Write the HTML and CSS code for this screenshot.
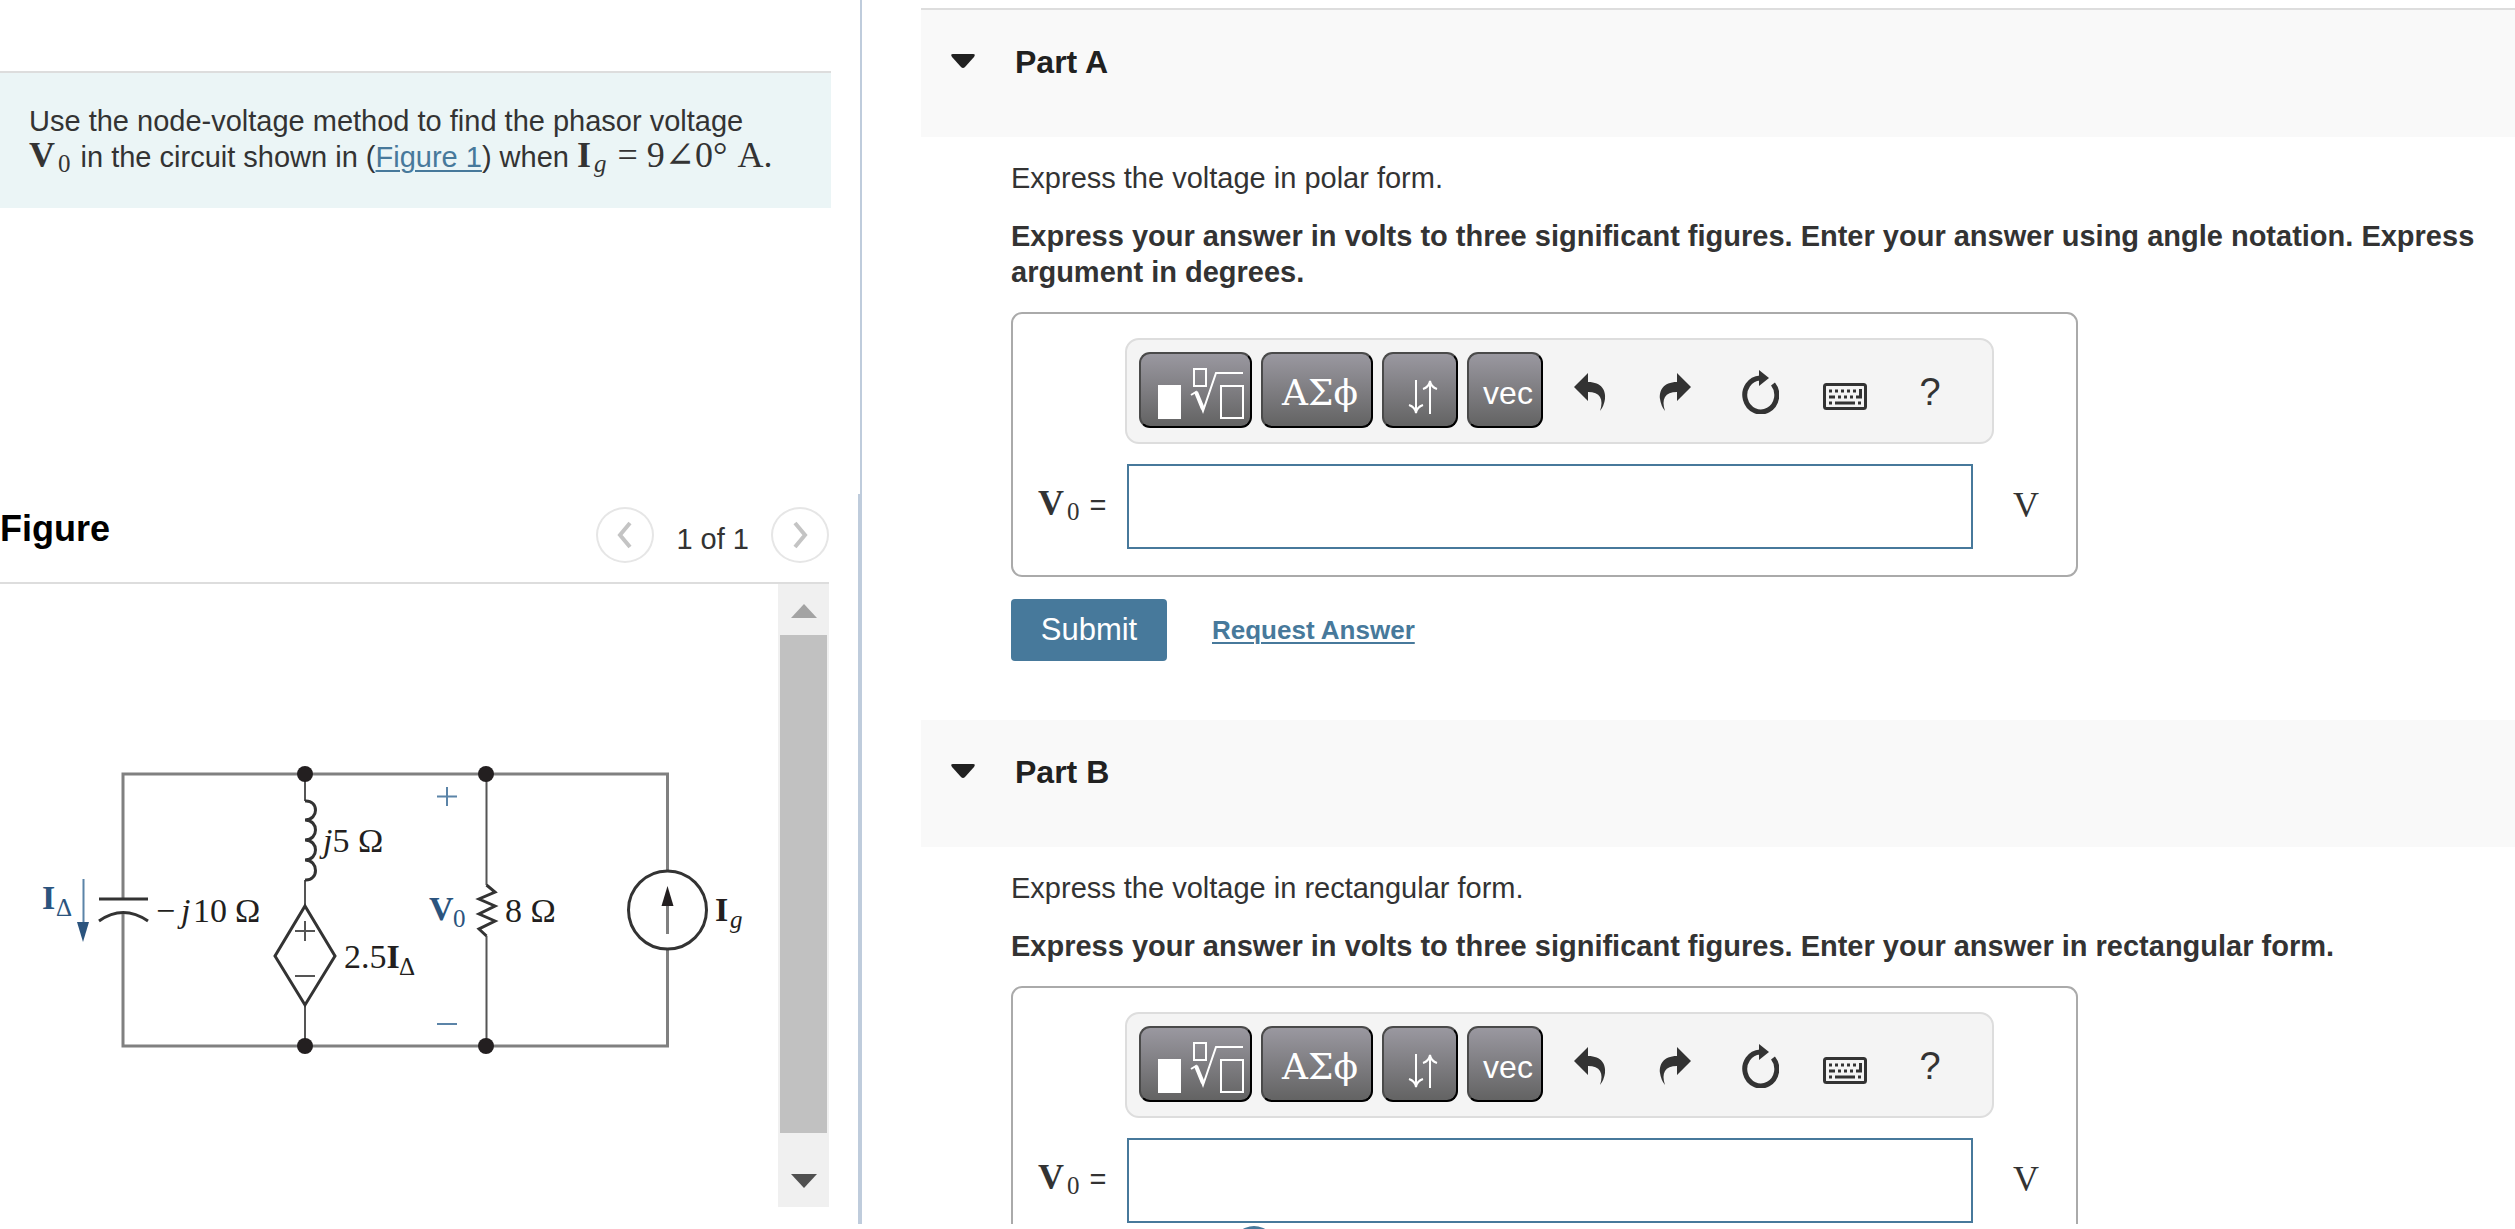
FILE: index.html
```html
<!DOCTYPE html>
<html lang="en">
<head>
<meta charset="utf-8">
<title>Node-voltage method</title>
<link rel="stylesheet" href="styles.css">
</head>
<body>
<svg class="sprite" aria-hidden="true">
  <symbol id="i-root" viewBox="0 0 86 52">
    <rect x="0" y="18" width="23" height="34" fill="#fff"/>
    <rect x="36" y="2" width="12" height="17" fill="none" stroke="#fff" stroke-width="2"/>
    <path d="M33 28l5-3 7 19 13-38h27" fill="none" stroke="#fff" stroke-width="2"/>
    <path d="M38 25l7 17" stroke="#fff" stroke-width="4"/>
    <rect x="63" y="19" width="22" height="32" fill="none" stroke="#fff" stroke-width="2"/>
  </symbol>
  <symbol id="i-updown" viewBox="0 0 30 34">
    <path d="M8 0v32M1 25q6 2 7 8q1-6 7-8M22 34V2M15 9q6-2 7-8q1 6 7 8" fill="none" stroke="#fff" stroke-width="2"/>
  </symbol>
  <symbol id="i-undo" viewBox="0 0 32 38">
    <path d="M0 14L14 0v9C28 9 32 18 31 26q-1 7-5 12C30 26 26 19 14 19v9z" fill="#333"/>
  </symbol>
  <symbol id="i-reset" viewBox="0 0 38 44">
    <path d="M19 8A16 17 0 1 0 32 14" fill="none" stroke="#333" stroke-width="5"/>
    <path d="M18 0l10 8-10 8z" fill="#333"/>
  </symbol>
  <symbol id="i-keys" viewBox="0 0 44 27">
    <rect x="1.500" y="1.500" width="41" height="24" rx="2" fill="none" stroke="#333" stroke-width="3"/>
    <path d="M6 8h3M12 8h3M18 8h3M24 8h3M30 8h3M6 14h6M15 14h3M21 14h3M27 14h3M33 14h6M37.500 6v9M6 20h3M12 20h20M35 20h3" fill="none" stroke="#333" stroke-width="3"/>
  </symbol>
</svg>

<main class="page">
  <section class="left">
    <div class="problem">
      <p>Use the node-voltage method to find the phasor voltage <span class="math"><b>V</b><sub>0</sub></span> in the circuit shown in (<a href="#figure">Figure 1</a>) when <span class="math"><b>I</b><sub><i>g</i></sub><span class="rel">=</span>9∠0°<span class="qty">A</span>.</span></p>
    </div>
    <div class="figure" id="figure">
      <header class="figure-head">
        <h2>Figure</h2>
        <nav class="pager">
          <button type="button" aria-label="Previous figure"><svg width="16" height="28" viewBox="0 0 16 28"><path d="M13 2L3 14l10 12"/></svg></button>
          <span>1 of 1</span>
          <button type="button" aria-label="Next figure"><svg width="16" height="28" viewBox="0 0 16 28"><path d="M3 2l10 12L3 26"/></svg></button>
        </nav>
      </header>
      <div class="figure-body">
        <svg class="circuit" viewBox="0 584 778 623" role="img" aria-label="Circuit diagram">
          <g class="wire">
            <path d="M123 899V774H667.500V870M123 912V1046H667.500V950"/>
            <path class="thin" d="M305 774V801M305 880V906M305 1005V1046M486.500 774V885M486.500 936V1046"/>
          </g>
          <g class="part">
            <path d="M99 899H148M99 921Q123 904 148 921"/>
            <path d="M305 801C319 800 319 820 305 820C319 820 319 840 305 840C319 840 319 860 305 860C319 860 319 881 305 880"/>
            <path d="M305 906L335 956 305 1005 275 956Z"/>
            <path class="thin" d="M295 931H315M305 921V941M295 976H315"/>
            <path d="M486.500 885L495 892 479 899 495 906 479 914 495 921 479 929 486.500 936"/>
            <circle cx="667.500" cy="910" r="39"/>
            <path class="wire" d="M667.500 934V903"/>
          </g>
          <path d="M667.500 886l-6 20h12z"/>
          <circle cx="305" cy="774" r="8"/><circle cx="486" cy="774" r="8"/><circle cx="305" cy="1046" r="8"/><circle cx="486" cy="1046" r="8"/>
          <g class="blue">
            <path d="M83.500 879V924M437 796.500H457M447 787V806M437 1024H457"/>
            <path class="fill" d="M77 922h12l-6 20z"/>
            <text x="42" y="909"><tspan class="b">I</tspan><tspan class="s" x="56" y="916">Δ</tspan></text>
            <text x="429" y="920"><tspan class="b">V</tspan><tspan class="s" x="453" y="927">0</tspan></text>
          </g>
          <text x="323" y="852"><tspan class="i">j</tspan>5 Ω</text>
          <text x="156" y="922">−<tspan class="i" x="181">j</tspan><tspan x="193">10</tspan><tspan x="235">Ω</tspan></text>
          <text x="344" y="968">2.5<tspan class="b">I</tspan><tspan class="s" x="399" y="975">Δ</tspan></text>
          <text x="505" y="922">8 Ω</text>
          <text x="715" y="921"><tspan class="b">I</tspan><tspan class="s i" x="730" y="928">g</tspan></text>
        </svg>
        <div class="scrollbar">
          <button type="button" aria-label="Scroll up"><svg width="26" height="14" viewBox="0 0 26 14"><path d="M13 0l13 14H0z" fill="#a3a3a3"/></svg></button>
          <div class="thumb"></div>
          <button class="down" type="button" aria-label="Scroll down"><svg width="26" height="14" viewBox="0 0 26 14"><path d="M0 0h26L13 14z" fill="#505050"/></svg></button>
        </div>
      </div>
    </div>
  </section>
  <div class="divider"><div></div></div>

  <section class="right">
    <article class="part-box first">
      <header class="part-head"><svg width="24" height="14" viewBox="0 0 24 14"><path d="M2 0h20q3 0 1 3L14 13q-2 2-4 0L1 3Q-1 0 2 0z" fill="#212121"/></svg><h2>Part A</h2></header>
      <div class="part-body">
        <p>Express the voltage in polar form.</p>
        <p class="strong">Express your answer in volts to three significant figures. Enter your answer using angle notation. Express argument in degrees.</p>
        <form class="answer">
          <div class="toolbar">
            <button class="key wide" type="button" aria-label="Templates"><svg class="root" width="86" height="52"><use href="#i-root"/></svg></button>
            <button class="key greek" type="button">ΑΣϕ</button>
            <button class="key" type="button" aria-label="Arrows"><svg class="updown" width="30" height="36"><use href="#i-updown"/></svg></button>
            <button class="key vec" type="button">vec</button>
            <button class="tool" type="button" aria-label="Undo"><svg width="32" height="38"><use href="#i-undo"/></svg></button>
            <button class="tool" type="button" aria-label="Redo"><svg class="flip" width="32" height="38"><use href="#i-undo"/></svg></button>
            <button class="tool" type="button" aria-label="Reset"><svg width="38" height="44"><use href="#i-reset"/></svg></button>
            <button class="tool kb" type="button" aria-label="Keyboard"><svg width="44" height="27"><use href="#i-keys"/></svg></button>
            <button class="tool help" type="button">?</button>
          </div>
          <div class="entry">
            <label for="a"><span class="math"><b>V</b><sub>0</sub></span> =</label>
            <input id="a" type="text">
            <span class="unit">V</span>
          </div>
        </form>
        <div class="actions"><button class="submit" type="button">Submit</button><a href="#request">Request Answer</a></div>
      </div>
    </article>

    <article class="part-box">
      <header class="part-head"><svg width="24" height="14" viewBox="0 0 24 14"><path d="M2 0h20q3 0 1 3L14 13q-2 2-4 0L1 3Q-1 0 2 0z" fill="#212121"/></svg><h2>Part B</h2></header>
      <div class="part-body">
        <p>Express the voltage in rectangular form.</p>
        <p class="strong">Express your answer in volts to three significant figures. Enter your answer in rectangular form.</p>
        <form class="answer">
          <div class="toolbar">
            <button class="key wide" type="button" aria-label="Templates"><svg class="root" width="86" height="52"><use href="#i-root"/></svg></button>
            <button class="key greek" type="button">ΑΣϕ</button>
            <button class="key" type="button" aria-label="Arrows"><svg class="updown" width="30" height="36"><use href="#i-updown"/></svg></button>
            <button class="key vec" type="button">vec</button>
            <button class="tool" type="button" aria-label="Undo"><svg width="32" height="38"><use href="#i-undo"/></svg></button>
            <button class="tool" type="button" aria-label="Redo"><svg class="flip" width="32" height="38"><use href="#i-undo"/></svg></button>
            <button class="tool" type="button" aria-label="Reset"><svg width="38" height="44"><use href="#i-reset"/></svg></button>
            <button class="tool kb" type="button" aria-label="Keyboard"><svg width="44" height="27"><use href="#i-keys"/></svg></button>
            <button class="tool help" type="button">?</button>
          </div>
          <div class="entry">
            <label for="b"><span class="math"><b>V</b><sub>0</sub></span> =</label>
            <input id="b" type="text">
            <span class="unit">V</span>
          </div>
        </form>
      </div>
    </article>
  </section>
</main>
<div class="bubble"></div>
</body>
</html>
```

FILE: styles.css
```css
* { box-sizing: border-box; }
body {
  margin: 0;
  height: 100vh;
  overflow: hidden;
  position: relative;
  background: #fff;
  color: #333;
  font: 29px/36px "Liberation Sans", Arial, sans-serif;
}
p, h2 { margin: 0; }
a { color: #47799b; text-decoration-thickness: 2px; text-underline-offset: 3px; }
button { padding: 0; border: 0; background: none; font: inherit; color: inherit; }
.sprite { display: none; }

.page {
  display: grid;
  grid-template-columns: 858px 4px minmax(0, 1fr);
  grid-template-rows: minmax(0, 1fr);
  height: calc(100vh - 5px);
  overflow: hidden;
}

.math { font: 36px/30px "Liberation Serif", "DejaVu Serif", serif; white-space: nowrap; }
.math sub { font-size: 25px; line-height: 0; vertical-align: -5px; margin: 0 2px 0 3px; }
.math .rel { margin: 0 9px; }
.math .qty { margin-left: 10px; }

/* left column */
.left { padding: 71px 29px 17px 0; display: flex; flex-direction: column; min-height: 0; }
.problem {
  margin-right: -2px;
  padding: 30px 48px 33px 29px;
  border-top: 2px solid #ddd;
  background: #ebf5f6;
}
.figure { margin-top: auto; }
.figure-head {
  display: flex;
  justify-content: space-between;
  align-items: flex-start;
  height: 77px;
  border-bottom: 2px solid #ddd;
}
.figure-head h2 { font-size: 36px; line-height: 44px; color: #000; }
.pager { display: flex; align-items: center; }
.pager span { padding: 8px 22px 0; }
.pager button {
  display: flex;
  align-items: center;
  justify-content: center;
  width: 58px;
  height: 56px;
  border: 2px solid #e6e6e6;
  border-radius: 50%;
}
.pager path { fill: none; stroke: #c4c4c4; stroke-width: 4; }
.figure-body { display: flex; height: 623px; }
.circuit { flex: 1; min-width: 0; fill: #231f20; font: 34px "Liberation Serif", serif; }
.circuit .part, .circuit .wire { fill: none; stroke: #333; stroke-width: 3; }
.circuit .wire { stroke: #808080; }
.circuit .thin { stroke: #555; stroke-width: 2; }
.circuit .b { font-weight: bold; }
.circuit .i { font-style: italic; }
.circuit .s { font-size: 25px; }
.circuit .blue { fill: #2b547e; }
.circuit .blue path { fill: none; stroke: #5b84a8; stroke-width: 2; }
.circuit .blue .fill { fill: #2b547e; stroke: none; }
.scrollbar { display: flex; flex-direction: column; width: 51px; padding: 0 2px; background: #f0f0f0; }
.scrollbar button { display: flex; align-items: center; justify-content: center; height: 51px; padding-top: 2px; }
.scrollbar .thumb { flex: 1; background: #c1c1c1; }
.scrollbar .down { height: 74px; align-items: flex-start; padding-top: 41px; }

.divider { border-right: 2px solid #bfccdc; padding-top: 494px; }
.divider div { width: 2px; height: 100%; background: #bfccdc; }

/* right column */
.right { padding: 8px 0 0 59px; min-width: 0; }
.part-head {
  display: flex;
  align-items: flex-start;
  gap: 40px;
  height: 127px;
  padding: 34px 30px 0;
  background: #f9f9f9;
  color: #212121;
}
.first .part-head { height: 129px; border-top: 2px solid #ddd; }
.part-head svg { margin-top: 10px; }
.part-head h2 { font-size: 32px; line-height: 36px; }
.part-body { padding: 23px 20px 60px 90px; }
.part-body .strong { margin: 22px 0; font-weight: bold; }
.answer {
  width: 1067px;
  max-width: 100%;
  height: 265px;
  padding: 24px;
  border: 2px solid #aaa;
  border-radius: 11px;
}
.toolbar {
  display: flex;
  gap: 9px;
  width: 869px;
  height: 106px;
  margin-left: 88px;
  padding: 12px;
  border: 2px solid #ddd;
  border-radius: 14px;
  background: #f4f4f4;
}
.key {
  display: flex;
  align-items: center;
  justify-content: center;
  flex: none;
  width: 76px;
  height: 76px;
  border: 2px solid;
  border-color: #4a4a4a #000 #000 #4a4a4a;
  border-radius: 11px;
  background: linear-gradient(#9a98a0, #636363);
  color: #fff;
}
.key.wide { width: 113px; }
.root { margin: 6px 0 0 10px; }
.updown { margin: 14px 0 0 6px; }
.key.greek { width: 112px; font: 36px "DejaVu Serif", serif; padding: 4px 0 0 6px; }
.key.vec { font-size: 32px; padding: 6px 0 0 6px; }
.tool { display: flex; align-items: center; justify-content: center; width: 76px; height: 76px; padding-top: 4px; }
.flip { transform: scaleX(-1); }
.tool.kb { padding-top: 13px; }
.tool.help { font-size: 38px; }
.entry { display: flex; align-items: center; margin-top: 20px; }
.entry label { width: 89px; margin-left: 1px; padding-bottom: 4px; }
.entry input { width: 846px; height: 85px; border: 2px solid #47799b; background: #fff; font: inherit; padding: 0 12px; }
.unit { margin-left: 40px; padding-bottom: 4px; font: 36px "Liberation Serif", serif; }
.actions { display: flex; align-items: center; gap: 45px; margin-top: 22px; }
.submit { width: 156px; height: 62px; margin-bottom: -1px; border-radius: 4px; background: #47799b; color: #fff; font-size: 31px; }
.actions a { font-weight: bold; font-size: 26px; }

.bubble {
  position: absolute;
  left: 1232px;
  top: 1226px;
  width: 44px;
  height: 44px;
  border-radius: 50%;
  background: #47799b;
}
```
